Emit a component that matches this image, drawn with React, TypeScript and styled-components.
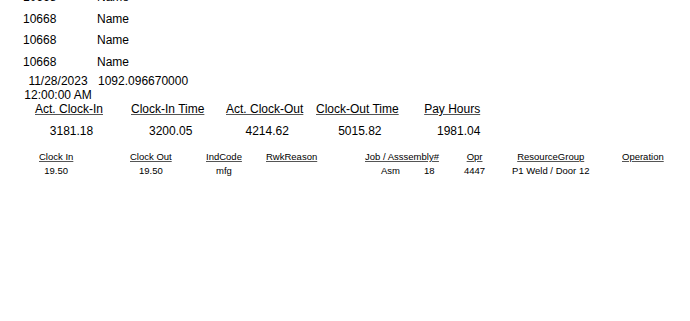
import React from 'react';
import styled, { createGlobalStyle } from 'styled-components';

const GlobalStyle = createGlobalStyle`
  html, body {
    margin: 0;
    background: #ffffff;
  }
  body {
    color: #000000;
    font-family: "Liberation Sans", Arial, sans-serif;
    overflow: hidden;
  }
`;

const Page = styled.div`
  height: 321px;
  overflow: hidden;
  width: 690px;
`;

const EmployeeList = styled.div`
  display: flex;
  flex-flow: column;
  margin-top: -13px;
`;

const EmployeeRow = styled.div`
  display: grid;
  font-size: 12px;
  grid-template-columns: 74px auto;
  height: 21.5px;
  line-height: 21px;
  padding-left: 23px;
`;

const DateBlock = styled.div`
  align-items: flex-start;
  display: flex;
  font-size: 12px;
  gap: 6px;
  line-height: 13.5px;
  margin-top: 2px;
  padding-left: 24px;
`;

const DateCell = styled.div`
  text-align: center;
  width: 68px;
`;

const Amount = styled.span``;

const Totals = styled.div`
  display: grid;
  font-size: 12px;
  grid-template-columns: 96px 95px 90px 108px auto;
  line-height: 14px;
  padding-left: 35px;
`;

const Column = styled.div`
  align-items: center;
  display: flex;
  flex-flow: column;
  width: max-content;
`;

const Heading = styled.span`
  text-decoration: underline;
  text-decoration-color: #555555;
  text-underline-offset: 1px;
`;

const TotalValue = styled.span<{ $shift: number }>`
  margin-top: 8px;
  padding-left: ${(p) => p.$shift}px;
`;

const Detail = styled.div`
  display: grid;
  font-size: 9.5px;
  grid-template-columns: 91px 76px 60px 99px 99px 48px 110px auto;
  line-height: 13px;
  margin-top: 12px;
  padding-left: 39px;
`;

const DetailValue = styled.span`
  margin-top: 1px;
  min-height: 13px;
`;

const ValuePair = styled.div`
  align-self: stretch;
  display: flex;
  gap: 24px;
  margin-top: 1px;
  padding-left: 16px;
`;

const employees = [
  { id: '10668', name: 'Name' },
  { id: '10668', name: 'Name' },
  { id: '10668', name: 'Name' },
  { id: '10668', name: 'Name' },
];

const totals = [
  { label: 'Act. Clock-In', value: '3181.18', shift: 5 },
  { label: 'Clock-In Time', value: '3200.05', shift: 6 },
  { label: 'Act. Clock-Out', value: '4214.62', shift: 5 },
  { label: 'Clock-Out Time', value: '5015.82', shift: 5 },
  { label: 'Pay Hours', value: '1981.04', shift: 13 },
];

const details = [
  { label: 'Clock In', value: '19.50' },
  { label: 'Clock Out', value: '19.50' },
  { label: 'IndCode', value: 'mfg' },
  { label: 'RwkReason', value: '' },
  { label: 'Job / Asssembly#', value: ['Asm', '18'] },
  { label: 'Opr', value: '4447' },
  { label: 'ResourceGroup', value: 'P1 Weld / Door 12' },
  { label: 'Operation', value: '' },
];

export default function App() {
  return (
    <Page>
      <GlobalStyle />
      <EmployeeList>
        {employees.map((e, i) => (
          <EmployeeRow key={i}>
            <span>{e.id}</span>
            <span>{e.name}</span>
          </EmployeeRow>
        ))}
      </EmployeeList>
      <DateBlock>
        <DateCell>11/28/2023 12:00:00 AM</DateCell>
        <Amount>1092.096670000</Amount>
      </DateBlock>
      <Totals>
        {totals.map((t) => (
          <Column key={t.label}>
            <Heading>{t.label}</Heading>
            <TotalValue $shift={t.shift}>{t.value}</TotalValue>
          </Column>
        ))}
      </Totals>
      <Detail>
        {details.map((d) => (
          <Column key={d.label}>
            <Heading>{d.label}</Heading>
            {Array.isArray(d.value) ? (
              <ValuePair>
                {d.value.map((v) => (
                  <span key={v}>{v}</span>
                ))}
              </ValuePair>
            ) : (
              <DetailValue>{d.value}</DetailValue>
            )}
          </Column>
        ))}
      </Detail>
    </Page>
  );
}
